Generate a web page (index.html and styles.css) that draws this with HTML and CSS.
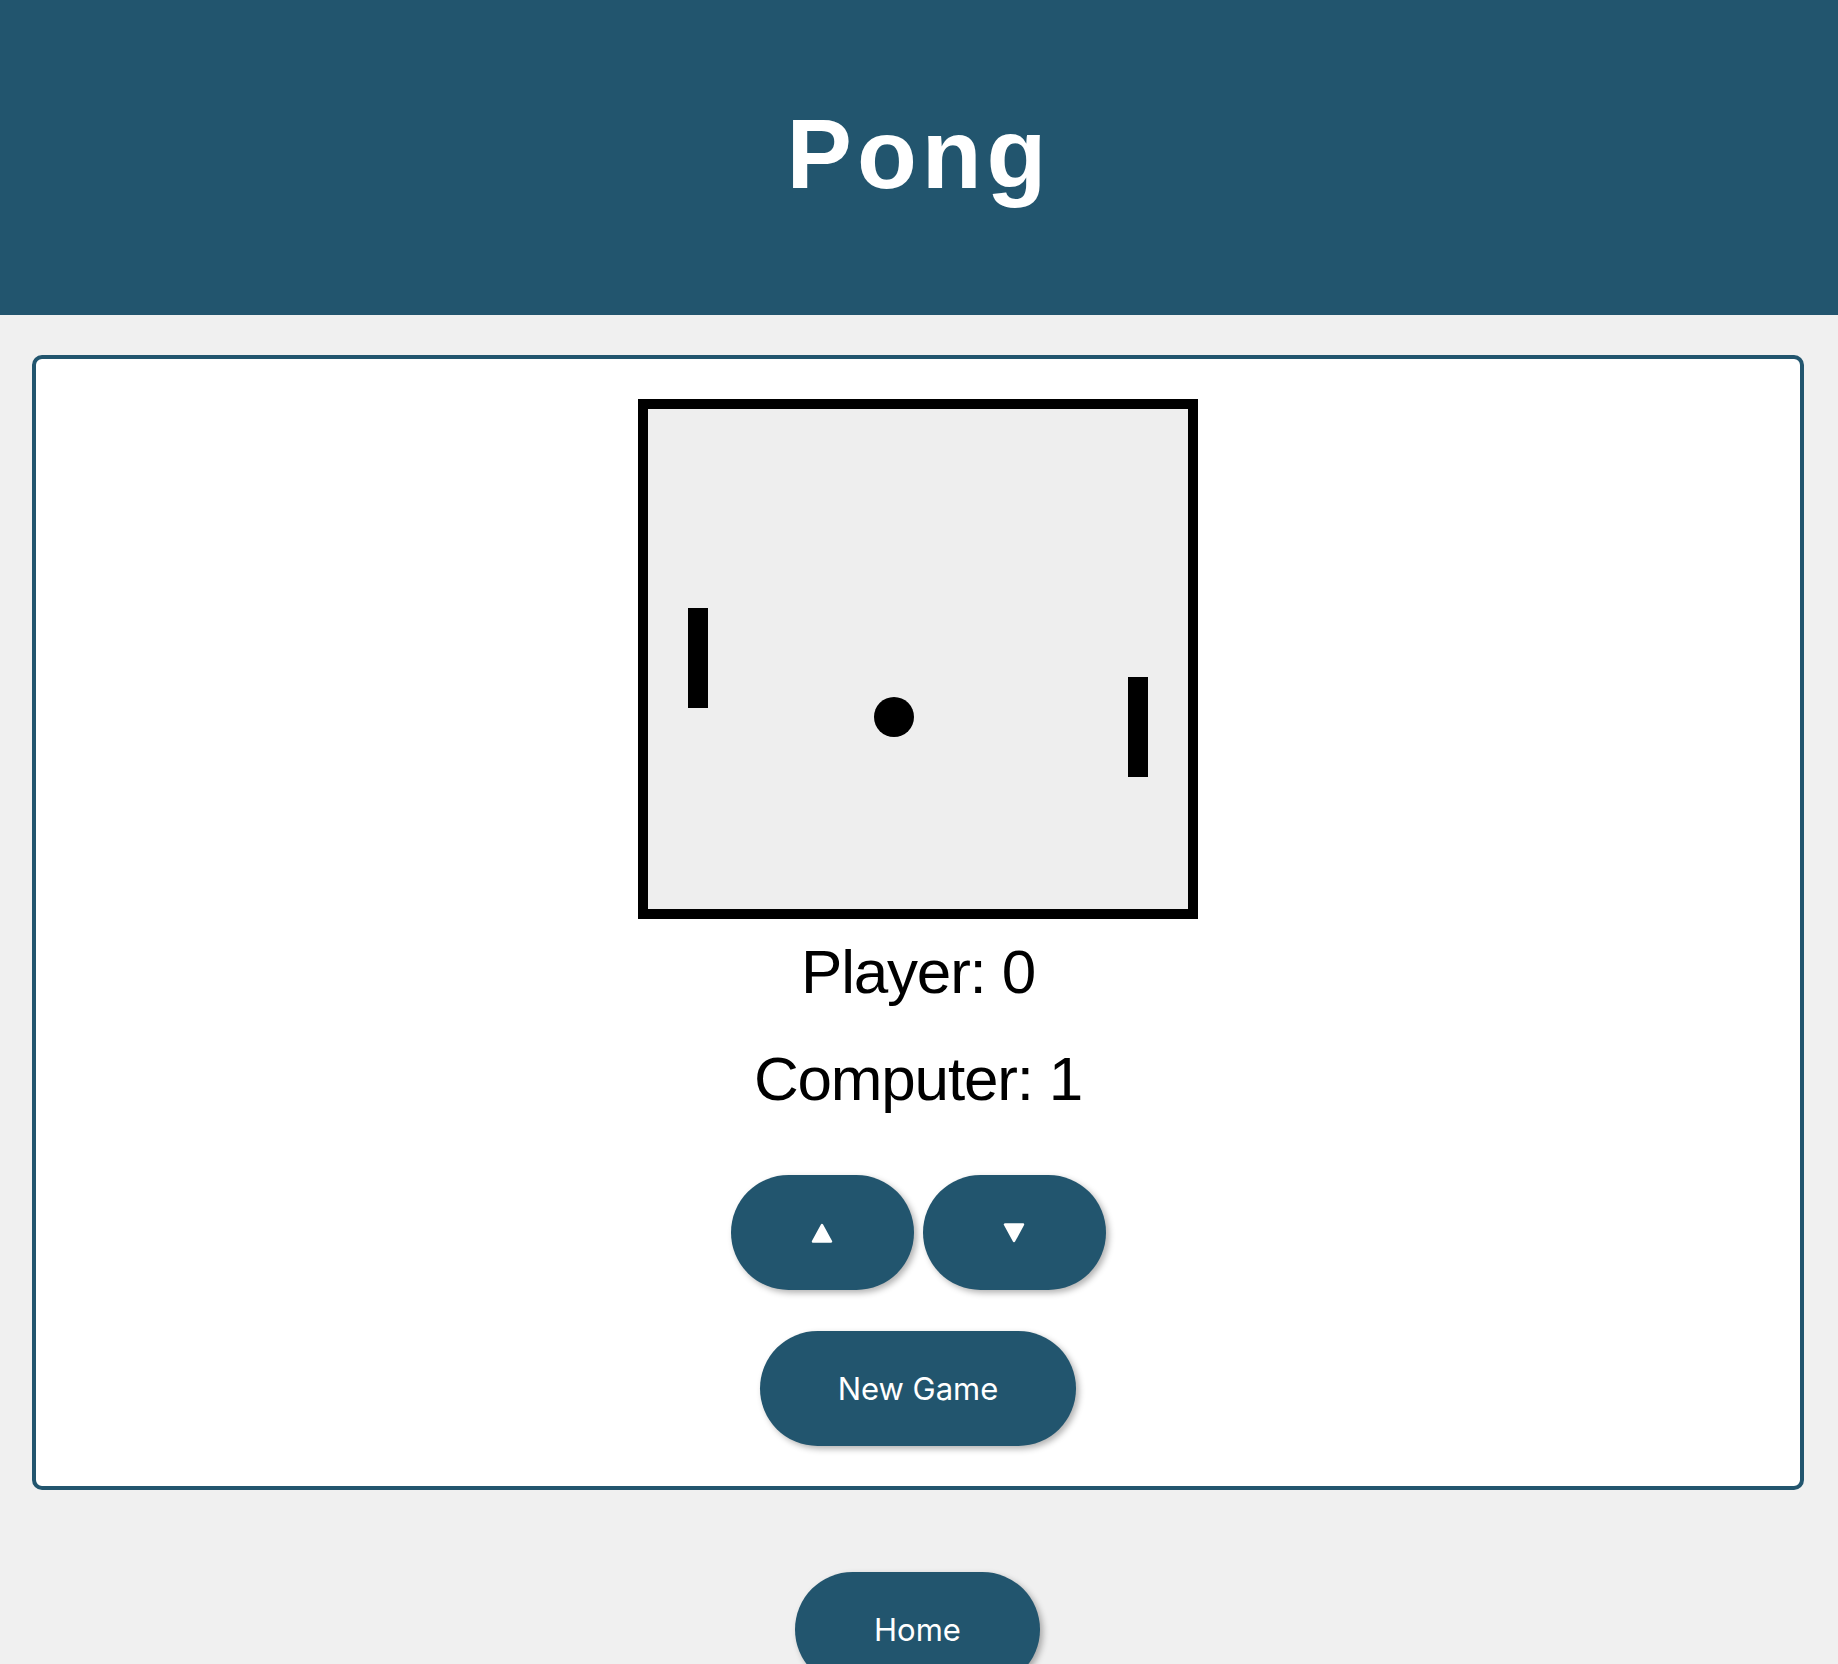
FILE: index.html
```html
<!DOCTYPE html>
<html lang="en">
<head>
<meta charset="utf-8">
<title>Pong</title>
<link rel="stylesheet" href="styles.css">
</head>
<body>
<header class="top">
  <h1 class="title">Pong</h1>
</header>
<main class="card">
  <div class="board">
    <div class="paddle paddle-left"></div>
    <div class="ball"></div>
    <div class="paddle paddle-right"></div>
  </div>
  <p class="score score-player">Player: 0</p>
  <p class="score score-computer">Computer: 1</p>
  <div class="controls">
    <button class="pill arrow" type="button" aria-label="Up">
      <svg class="tri" width="22" height="22" viewBox="0 0 22 22"><polygon points="11,3 20,19.5 2,19.5" fill="#fff" stroke="#fff" stroke-width="2.5" stroke-linejoin="round"/></svg>
    </button>
    <button class="pill arrow" type="button" aria-label="Down">
      <svg class="tri" width="22" height="22" viewBox="0 0 22 22"><polygon points="2,2.5 20,2.5 11,19" fill="#fff" stroke="#fff" stroke-width="2.5" stroke-linejoin="round"/></svg>
    </button>
  </div>
  <button class="pill new-game" type="button">New Game</button>
</main>
<div class="footer">
  <button class="pill home" type="button">Home</button>
</div>
</body>
</html>
```
FILE: styles.css
```css
html, body {
  margin: 0;
  padding: 0;
}
body {
  background: #f0f0f0;
  font-family: "Liberation Sans", Arial, sans-serif;
  color: #000;
}
.top {
  height: 315px;
  background: #22556e;
  display: flex;
  align-items: center;
  justify-content: center;
}
.title {
  margin: 0 0 7px 0;
  color: #fff;
  font-family: "Liberation Sans", Arial, sans-serif;
  font-weight: 700;
  font-size: 98px;
  line-height: 1;
  letter-spacing: 5px;
}
.card {
  margin: 40px 34px 0 32px;
  border: 4px solid #22556e;
  border-radius: 10px;
  background: #fff;
  padding: 40px;
  display: flex;
  flex-direction: column;
  align-items: center;
}
.board {
  position: relative;
  width: 540px;
  height: 500px;
  border: 10px solid #000;
  background: #eeeeee;
  flex: none;
}
.paddle {
  position: absolute;
  width: 20px;
  height: 100px;
  background: #000;
}
.paddle-left {
  left: 40px;
  top: 199px;
}
.paddle-right {
  left: 480px;
  top: 268px;
}
.ball {
  position: absolute;
  left: 226px;
  top: 288px;
  width: 40px;
  height: 40px;
  border-radius: 50%;
  background: #000;
}
.score {
  margin: 0;
  font-size: 62px;
  line-height: 70px;
  letter-spacing: -1.2px;
  text-align: center;
}
.score-player {
  margin-top: 18px;
}
.score-computer {
  margin-top: 37px;
}
.controls {
  display: flex;
  gap: 9px;
  margin-top: 61px;
}
.pill {
  border: none;
  background: #22556e;
  color: #fff;
  height: 115px;
  border-radius: 58px;
  box-shadow: 3px 3px 6px rgba(0, 0, 0, 0.3);
  font-family: Inter, "Liberation Sans", sans-serif;
  font-size: 31px;
  display: flex;
  align-items: center;
  justify-content: center;
  padding: 0;
  cursor: pointer;
}
.arrow {
  width: 183px;
}
.tri {
  display: block;
}
.new-game {
  width: 316px;
  margin-top: 41px;
}
.footer {
  display: flex;
  justify-content: center;
  margin-top: 82px;
  padding-right: 3px;
}
.home {
  width: 245px;
}
```
